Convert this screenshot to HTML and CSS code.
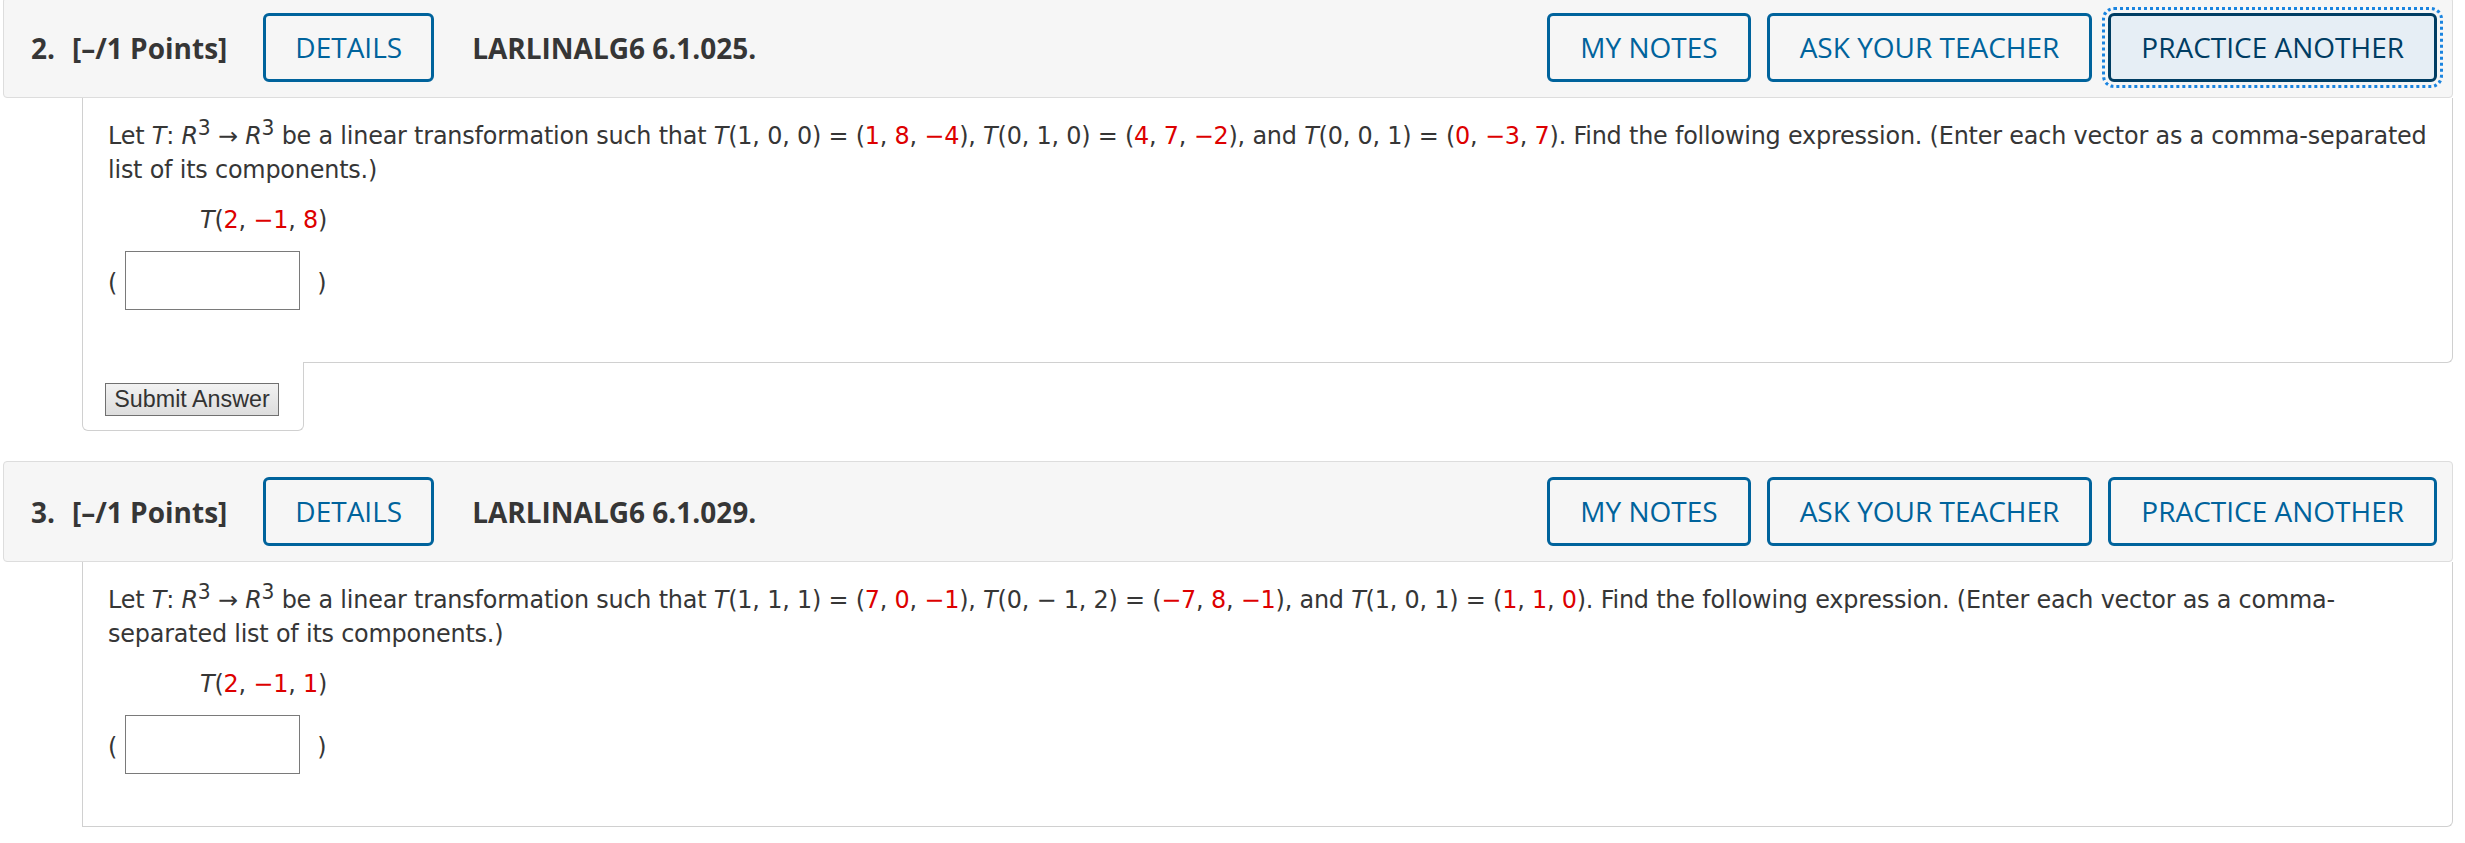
FILE: index.html
```html
<!DOCTYPE html>
<html>
<head>
<meta charset="utf-8">
<link rel="stylesheet" href="styles.css">
</head>
<body>
<div class="page">
  <section class="question first">
    <div class="qhead">
      <span class="qnum">2.</span>
      <span class="qpts">[–/1 Points]</span>
      <button class="btn details">DETAILS</button>
      <span class="qtitle">LARLINALG6 6.1.025.</span>
      <div class="actions">
        <button class="btn">MY NOTES</button>
        <button class="btn">ASK YOUR TEACHER</button>
        <button class="btn focused">PRACTICE ANOTHER</button>
      </div>
    </div>
    <div class="qbody tabbed">
      <p class="prompt">Let <i>T</i>: <i>R</i><sup>3</sup> → <i>R</i><sup>3</sup> be a linear transformation such that <i>T</i>(1, 0, 0) = (<span class="r">1</span>, <span class="r">8</span>, <span class="r">−4</span>), <i>T</i>(0, 1, 0) = (<span class="r">4</span>, <span class="r">7</span>, <span class="r">−2</span>), and <i>T</i>(0, 0, 1) = (<span class="r">0</span>, <span class="r">−3</span>, <span class="r">7</span>). Find the following expression. (Enter each vector as a comma-separated list of its components.)</p>
      <p class="expr"><i>T</i>(<span class="r">2</span>, <span class="r">−1</span>, <span class="r">8</span>)</p>
      <div class="answer"><span class="par">(</span><input type="text" class="ans"><span class="par">)</span></div>
    </div>
    <div class="tab"><button class="submit">Submit Answer</button></div>
  </section>

  <section class="question">
    <div class="qhead">
      <span class="qnum">3.</span>
      <span class="qpts">[–/1 Points]</span>
      <button class="btn details">DETAILS</button>
      <span class="qtitle">LARLINALG6 6.1.029.</span>
      <div class="actions">
        <button class="btn">MY NOTES</button>
        <button class="btn">ASK YOUR TEACHER</button>
        <button class="btn">PRACTICE ANOTHER</button>
      </div>
    </div>
    <div class="qbody">
      <p class="prompt">Let <i>T</i>: <i>R</i><sup>3</sup> → <i>R</i><sup>3</sup> be a linear transformation such that <i>T</i>(1, 1, 1) = (<span class="r">7</span>, <span class="r">0</span>, <span class="r">−1</span>), <i>T</i>(0, − 1, 2) = (<span class="r">−7</span>, <span class="r">8</span>, <span class="r">−1</span>), and <i>T</i>(1, 0, 1) = (<span class="r">1</span>, <span class="r">1</span>, <span class="r">0</span>). Find the following expression. (Enter each vector as a comma-separated list of its components.)</p>
      <p class="expr"><i>T</i>(<span class="r">2</span>, <span class="r">−1</span>, <span class="r">1</span>)</p>
      <div class="answer"><span class="par">(</span><input type="text" class="ans"><span class="par">)</span></div>
    </div>
  </section>
</div>
</body>
</html>
```

FILE: styles.css
```css
html, body {
  margin: 0;
  padding: 0;
  background: #ffffff;
}

.page {
  margin: -3px 12px 0 3px;
}

.question + .question {
  margin-top: 30px;
}

.qhead {
  box-sizing: border-box;
  height: 101px;
  display: flex;
  align-items: center;
  padding: 0 15px 0 27px;
  background: #f6f6f6;
  border: 1px solid #dddddd;
  border-radius: 4px;
  font-family: "Open Sans", "Noto Sans", sans-serif;
  font-size: 28px;
  color: #363636;
}

.qnum {
  font-weight: 700;
  margin-right: 17px;
}

.qpts {
  font-weight: 700;
  margin-right: 36px;
}

.qtitle {
  font-weight: 700;
  margin-left: 38px;
}

.btn {
  box-sizing: border-box;
  height: 69px;
  padding: 0 30px;
  border: 3px solid #00639c;
  border-radius: 6px;
  background: transparent;
  color: #00639c;
  font-family: "Open Sans", "Noto Sans", sans-serif;
  font-size: 28px;
  line-height: 63px;
  white-space: nowrap;
}

.btn.details {
  padding: 0 29px;
}

.actions {
  margin-left: auto;
  display: flex;
  gap: 16px;
}

.btn.focused {
  background: #e6eef5;
  border-color: #003d63;
  color: #003d63;
  outline: 3px dotted #1a84e0;
  outline-offset: 3px;
}

.qbody {
  margin-left: 79px;
  border: 1px solid #d0d0d0;
  border-top: none;
  border-radius: 0 0 6px 0;
  padding: 21px 25px 52px 25px;
  background: #ffffff;
  font-family: "DejaVu Sans", Verdana, sans-serif;
  font-size: 23.9px;
  letter-spacing: -0.2px;
  line-height: 34px;
  color: #363636;
}

.prompt {
  margin: 0;
}

.prompt sup {
  font-size: 0.85em;
  line-height: 0;
}

.r {
  color: #dd0000;
}

.expr {
  margin: 16px 0 0 92px;
}

.answer {
  display: flex;
  align-items: center;
  height: 59px;
  margin-top: 14px;
}

.par {
  display: block;
  margin-top: 4px;
}

.ans {
  box-sizing: border-box;
  width: 175px;
  height: 59px;
  margin: 0 17px 0 8px;
  border: 1px solid #7a7a7a;
  border-radius: 0;
  background: #ffffff;
  padding: 0;
}

.tab {
  box-sizing: border-box;
  width: 222px;
  margin: -1px 0 0 79px;
  padding: 21px 0 14px 22px;
  border: 1px solid #d0d0d0;
  border-top: none;
  border-radius: 0 0 6px 6px;
  background: #ffffff;
}

.submit {
  box-sizing: border-box;
  display: block;
  width: 174px;
  height: 33px;
  padding: 0;
  border: 1px solid #707070;
  border-radius: 0;
  background: linear-gradient(#f2f2f2, #dddddd);
  font-family: "Liberation Sans", Arial, sans-serif;
  font-size: 23.3px;
  line-height: 31px;
  color: #333333;
}
```
